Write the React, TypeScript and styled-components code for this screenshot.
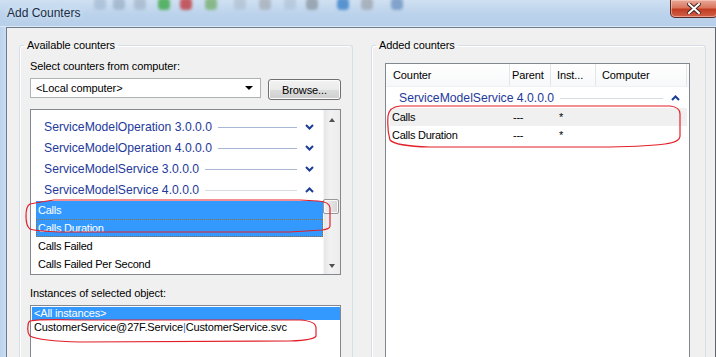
import React from "react";
import styled, { createGlobalStyle } from "styled-components";

const GlobalStyle = createGlobalStyle`
  html, body {
    margin: 0;
    padding: 0;
  }
  body {
    width: 716px;
    height: 357px;
    overflow: hidden;
    background: #f0f0f0;
    font-family: "Liberation Sans", Arial, sans-serif;
    font-size: 11px;
    letter-spacing: -0.1px;
    color: #000;
  }
`;

const Window = styled.div`
  position: relative;
  width: 716px;
  height: 357px;
  display: flex;
  flex-direction: column;
  overflow: hidden;
`;

const TitleBar = styled.div`
  position: relative;
  height: 27px;
  flex: none;
  box-sizing: border-box;
  display: flex;
  align-items: flex-start;
  background: linear-gradient(to bottom, #cfe0f2 0%, #bad2eb 55%, #b7cfe9 100%);
  box-shadow: inset 0 -1px 0 #dce8f5;
  overflow: hidden;
`;

const BlurStrip = styled.div`
  position: absolute;
  left: 94px;
  top: -2px;
  display: flex;
`;

const BlurIcon = styled.span<{ $color: string; $gap: number }>`
  width: 12px;
  height: 12px;
  margin-left: ${(p) => p.$gap}px;
  border-radius: 4px;
  background: ${(p) => p.$color};
  filter: blur(1.8px);
  opacity: 0.8;
`;

const Title = styled.div`
  position: relative;
  padding-left: 7px;
  line-height: 26px;
  font-size: 12px;
  letter-spacing: 0;
  color: #1b2c45;
  text-shadow: 0 0 6px #e8f1fb;
`;

const CloseButton = styled.div`
  position: relative;
  margin-left: auto;
  margin-right: -2px;
  width: 48px;
  height: 18px;
  box-sizing: border-box;
  border: 1px solid #5b2a24;
  border-top: none;
  border-radius: 0 0 5px 5px;
  background: linear-gradient(to bottom, #e9a999 0%, #d9765f 45%, #c23c23 55%, #d2614a 100%);
  box-shadow: inset 0 0 0 1px rgba(255, 220, 210, 0.5);
  display: flex;
  align-items: center;
  justify-content: center;
`;

const Main = styled.div`
  flex: 1;
  display: flex;
  min-height: 0;
`;

const LeftFrame = styled.div`
  width: 6px;
  flex: none;
  background: linear-gradient(to right, #bcd3ec, #c9dcf1);
`;

const DialogBody = styled.div`
  flex: 1;
  display: flex;
  gap: 18px;
  padding: 10px 9px 0 12px;
  background: #f0f0f0;
  border-left: 1px solid #6e7d8e;
  border-top: 1px solid #6e7d8e;
  border-right: 1px solid #5c6570;
`;

const Group = styled.fieldset<{ $width: number; $padTop: number; $padLeft: number }>`
  margin: 0;
  width: ${(p) => p.$width}px;
  box-sizing: border-box;
  min-width: 0;
  padding: ${(p) => p.$padTop}px 0 0 ${(p) => p.$padLeft}px;
  border: 1px solid #d5dfe5;
  border-bottom: none;
  border-radius: 3px 3px 0 0;
  box-shadow: inset 1px 1px 0 #fff;
  display: flex;
  flex-direction: column;
  align-items: flex-start;
`;

const Legend = styled.legend<{ $shift: number }>`
  padding: 0 3px;
  margin-left: ${(p) => p.$shift}px;
  line-height: 15px;
  font-size: 11px;
`;

const Label = styled.div<{ $top: number }>`
  margin-top: ${(p) => p.$top}px;
  line-height: 15px;
  height: 15px;
`;

const ComputerRow = styled.div`
  margin-top: 4px;
  display: flex;
  align-items: flex-start;
  gap: 7px;
`;

const Combo = styled.div`
  width: 231px;
  height: 20px;
  box-sizing: border-box;
  border: 1px solid #adb2b5;
  background: #fff;
  display: flex;
  align-items: center;
  padding: 0 5px;
`;

const ComboText = styled.span`
  flex: 1;
`;

const DropArrow = styled.span`
  width: 0;
  height: 0;
  border-left: 4px solid transparent;
  border-right: 4px solid transparent;
  border-top: 4px solid #000;
  margin-right: 2px;
`;

const Button = styled.div`
  margin-top: 1px;
  width: 73px;
  height: 21px;
  box-sizing: border-box;
  border: 1px solid #707070;
  border-radius: 3px;
  background: linear-gradient(to bottom, #f2f2f2 0%, #ebebeb 50%, #dddddd 51%, #cfcfcf 100%);
  box-shadow: inset 0 0 0 1px #fcfcfc;
  display: flex;
  align-items: center;
  justify-content: center;
`;

const ListBox = styled.div<{ $top: number; $width: number; $height: number }>`
  margin-top: ${(p) => p.$top}px;
  width: ${(p) => p.$width}px;
  height: ${(p) => p.$height}px;
  box-sizing: border-box;
  border: 1px solid #828790;
  background: #fff;
  display: flex;
  overflow: hidden;
  flex: none;
`;

const ListContent = styled.div`
  flex: 1;
  display: flex;
  flex-direction: column;
  padding-top: 6px;
  min-width: 0;
`;

const GroupRow = styled.div<{ $height: number }>`
  height: ${(p) => p.$height}px;
  display: flex;
  align-items: center;
  padding-left: 13px;
  color: #1e3a9b;
  font-size: 12.2px;
  letter-spacing: 0;
  white-space: nowrap;
  flex: none;
`;

const GroupLine = styled.span<{ $expanded?: boolean }>`
  flex: 1;
  height: 1px;
  margin: 1px 8px 0 6px;
  background: ${(p) => (p.$expanded ? "#d6dce4" : "#a8b7d6")};
`;

const ChevronBox = styled.span`
  width: 9px;
  height: 6px;
  margin-right: 9px;
  display: flex;
`;

const Counters = styled.div`
  padding-top: 1px;
  display: flex;
  flex-direction: column;
`;

const CounterRow = styled.div<{ $selected?: boolean; $focused?: boolean }>`
  margin-left: 5px;
  height: 18px;
  line-height: 18px;
  padding-left: 2px;
  box-sizing: border-box;
  white-space: nowrap;
  letter-spacing: -0.25px;
  background: ${(p) => (p.$selected ? "#3399ff" : "transparent")};
  color: ${(p) => (p.$selected ? "#fff" : "#000")};
  outline: ${(p) => (p.$focused ? "1px dotted #9a6a30" : "none")};
  outline-offset: -1px;
`;

const ScrollBar = styled.div`
  width: 17px;
  flex: none;
  display: flex;
  flex-direction: column;
  background: linear-gradient(to right, #e6e6e6, #f2f2f2 40%, #ececec);
  border-left: 1px solid #f5f5f5;
  box-sizing: border-box;
`;

const ScrollArrowBox = styled.div`
  height: 17px;
  display: flex;
  align-items: center;
  justify-content: center;
  flex: none;
`;

const ScrollArrow = styled.span<{ $up?: boolean }>`
  width: 0;
  height: 0;
  border-left: 3.5px solid transparent;
  border-right: 3.5px solid transparent;
  ${(p) => (p.$up ? "border-bottom: 4px solid #505050;" : "border-top: 4px solid #505050;")}
  margin-top: ${(p) => (p.$up ? "3px" : "0")};
`;

const ScrollTrack = styled.div`
  flex: 1;
`;

const Thumb = styled.div`
  margin: 72px 1px 0 -1px;
  height: 15px;
  box-sizing: border-box;
  border: 1px solid #979797;
  border-radius: 2px;
  background: linear-gradient(to right, #f2f2f2, #e4e4e4 50%, #d5d5d5);
  box-shadow: inset 0 0 0 1px #fafafa;
`;

const InstanceContent = styled.div`
  flex: 1;
  display: flex;
  flex-direction: column;
  padding: 1px 0 0 1px;
`;

const InstanceRow = styled.div<{ $selected?: boolean }>`
  height: ${(p) => (p.$selected ? 13 : 15)}px;
  line-height: ${(p) => (p.$selected ? 13 : 15)}px;
  padding-left: 2px;
  white-space: nowrap;
  letter-spacing: -0.15px;
  background: ${(p) => (p.$selected ? "#3399ff" : "transparent")};
  color: ${(p) => (p.$selected ? "#fff" : "#000")};
`;

const Pipe = styled.span`
  color: #4a72b8;
`;

const AddedContent = styled.div`
  flex: 1;
  display: flex;
  flex-direction: column;
`;

const HeaderRow = styled.div`
  height: 23px;
  display: grid;
  grid-template-columns: 124px 41px 45px 91px 1fr;
  background: linear-gradient(to bottom, #ffffff, #f7f8f9);
  border-bottom: 1px solid #eef0f2;
  box-sizing: border-box;
`;

const HeaderCell = styled.div<{ $pad: number }>`
  padding-left: ${(p) => p.$pad}px;
  border-right: 1px solid #e3e5e8;
  line-height: 22px;
  white-space: nowrap;
  overflow: hidden;
`;

const DataRow = styled.div<{ $shaded?: boolean }>`
  margin: 0 2px 0 4px;
  height: 18px;
  line-height: 18px;
  display: grid;
  grid-template-columns: 120px 41px 45px 1fr;
  letter-spacing: -0.25px;
  background: ${(p) => (p.$shaded ? "#f0f0f0" : "transparent")};
`;

const DataCell = styled.div<{ $pad: number }>`
  padding-left: ${(p) => p.$pad}px;
  white-space: nowrap;
`;

const Annotations = styled.svg`
  position: absolute;
  left: 0;
  top: 0;
  width: 716px;
  height: 357px;
  pointer-events: none;
`;

const Chevron = ({ up }: { up?: boolean }) => (
  <ChevronBox>
    <svg width="9" height="6" viewBox="0 0 9 6">
      <polyline
        points={up ? "1,5 4.5,1.5 8,5" : "1,1 4.5,4.5 8,1"}
        fill="none"
        stroke="#1c3d96"
        strokeWidth="2"
      />
    </svg>
  </ChevronBox>
);

const blurIcons = [
  { color: "#a9bed6", gap: 0 },
  { color: "#9fb3c9", gap: 7 },
  { color: "#a7b9cc", gap: 9 },
  { color: "#3ca845", gap: 12 },
  { color: "#c03a40", gap: 10 },
  { color: "#78b070", gap: 13 },
  { color: "#b2c3d4", gap: 17 },
  { color: "#a8b0ba", gap: 13 },
  { color: "#b3c6da", gap: 13 },
  { color: "#8e99a5", gap: 10 },
  { color: "#3b82c8", gap: 19 },
  { color: "#a0a8b2", gap: 12 },
  { color: "#7094c2", gap: 18 },
];

const objects = [
  { name: "ServiceModelOperation 3.0.0.0", expanded: false },
  { name: "ServiceModelOperation 4.0.0.0", expanded: false },
  { name: "ServiceModelService 3.0.0.0", expanded: false },
  { name: "ServiceModelService 4.0.0.0", expanded: true },
];

const counters = [
  { name: "Calls", selected: true },
  { name: "Calls Duration", selected: true, focused: true },
  { name: "Calls Failed" },
  { name: "Calls Failed Per Second" },
];

const added = [
  { name: "Calls", parent: "---", inst: "*" },
  { name: "Calls Duration", parent: "---", inst: "*" },
];

export default function App() {
  return (
    <Window>
      <GlobalStyle />
      <TitleBar>
        <BlurStrip>
          {blurIcons.map((b, i) => (
            <BlurIcon key={i} $color={b.color} $gap={b.gap} />
          ))}
        </BlurStrip>
        <Title>Add Counters</Title>
        <CloseButton>
          <svg width="14" height="11" viewBox="0 0 14 11">
            <path d="M2 1 L12 10 M12 1 L2 10" stroke="#4a2a26" strokeWidth="4" strokeLinecap="square" />
            <path d="M2 1 L12 10 M12 1 L2 10" stroke="#fff" strokeWidth="2" strokeLinecap="square" />
          </svg>
        </CloseButton>
      </TitleBar>

      <Main>
        <LeftFrame />
        <DialogBody>
          <Group $width={334} $padTop={6} $padLeft={10}>
            <Legend $shift={-6}>Available counters</Legend>
            <Label $top={0}>Select counters from computer:</Label>
            <ComputerRow>
              <Combo>
                <ComboText>&lt;Local computer&gt;</ComboText>
                <DropArrow />
              </Combo>
              <Button>Browse...</Button>
            </ComputerRow>
            <ListBox $top={9} $width={311} $height={166}>
              <ListContent>
                {objects.map((o) => (
                  <GroupRow key={o.name} $height={21}>
                    {o.name}
                    <GroupLine $expanded={o.expanded} />
                    <Chevron up={o.expanded} />
                  </GroupRow>
                ))}
                <Counters>
                  {counters.map((c) => (
                    <CounterRow key={c.name} $selected={c.selected} $focused={c.focused}>
                      {c.name}
                    </CounterRow>
                  ))}
                </Counters>
              </ListContent>
              <ScrollBar>
                <ScrollArrowBox>
                  <ScrollArrow $up />
                </ScrollArrowBox>
                <ScrollTrack>
                  <Thumb />
                </ScrollTrack>
                <ScrollArrowBox>
                  <ScrollArrow />
                </ScrollArrowBox>
              </ScrollBar>
            </ListBox>
            <Label $top={11}>Instances of selected object:</Label>
            <ListBox $top={4} $width={311} $height={80}>
              <InstanceContent>
                <InstanceRow $selected>&lt;All instances&gt;</InstanceRow>
                <InstanceRow>
                  CustomerService@27F.Service<Pipe>|</Pipe>CustomerService.svc
                </InstanceRow>
              </InstanceContent>
            </ListBox>
          </Group>

          <Group $width={335} $padTop={10} $padLeft={13}>
            <Legend $shift={-9}>Added counters</Legend>
            <ListBox $top={0} $width={305} $height={300}>
              <AddedContent>
                <HeaderRow>
                  <HeaderCell $pad={7}>Counter</HeaderCell>
                  <HeaderCell $pad={2}>Parent</HeaderCell>
                  <HeaderCell $pad={6}>Inst...</HeaderCell>
                  <HeaderCell $pad={6}>Computer</HeaderCell>
                </HeaderRow>
                <GroupRow $height={21}>
                  ServiceModelService 4.0.0.0
                  <GroupLine $expanded />
                  <Chevron up />
                </GroupRow>
                {added.map((a, i) => (
                  <DataRow key={a.name} $shaded={i === 0}>
                    <DataCell $pad={2}>{a.name}</DataCell>
                    <DataCell $pad={3}>{a.parent}</DataCell>
                    <DataCell $pad={8}>{a.inst}</DataCell>
                    <DataCell $pad={0} />
                  </DataRow>
                ))}
              </AddedContent>
            </ListBox>
          </Group>
        </DialogBody>
      </Main>

      <Annotations viewBox="0 0 716 357">
        <g fill="none" stroke="#e3202a" strokeWidth="1.2">
          <path d="M54 200 L300 200 L318 201 Q330 202 330 208 L330 226 Q330 229 322 230 L290 232 L60 232 Q36 231 30 229 Q26 226 26 216 Q26 206 30 204 Q40 202 54 200 Z" />
          <path d="M30 321 Q40 319 80 320 L300 320 Q316 321 316 328 L316 336 Q315 340 290 341 L80 342 Q40 341 30 336 Q27 333 28 326 Q28 322 30 321 Z" />
          <path d="M400 106 L670 106 Q680 107 680 114 L680 136 Q680 142 665 144 Q640 147 600 147 L430 147 Q395 146 390 140 Q387 130 388 116 Q389 107 400 106 Z" />
        </g>
      </Annotations>
    </Window>
  );
}
